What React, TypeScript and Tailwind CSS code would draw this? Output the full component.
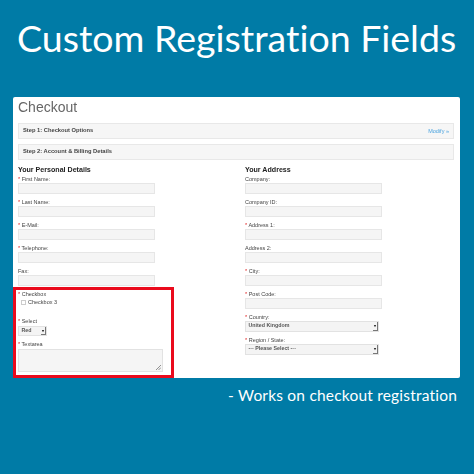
import React from 'react';

const Label = ({ text, required }: { text: string; required?: boolean }) => (
  <div className="h-[7.5px] whitespace-nowrap text-[5.5px] leading-[7.5px] text-[#444]">
    {required && <span className="text-[#e02020]">* </span>}
    {text}
  </div>
);

const Input = ({ text, required }: { text: string; required?: boolean }) => (
  <div className="h-[23px]">
    <Label text={text} required={required} />
    <div className="h-[10.5px] w-[137px] border border-[#e6e6e6] bg-[#f5f5f5]" />
  </div>
);

const Select = ({ value, className = '' }: { value: string; className?: string }) => (
  <div
    className={`flex h-[10.5px] items-center justify-between border border-[#e2e2e2] bg-[#f4f4f4] pl-[2.5px] text-[5.3px] font-bold text-[#555] ${className}`}
  >
    <span>{value}</span>
    <span className="flex h-full w-[5px] items-center justify-center border-r border-b border-[#777] text-[4px] leading-none text-[#222]">
      ▾
    </span>
  </div>
);

const Step = ({ title, modify }: { title: string; modify?: boolean }) => (
  <div className="flex h-[15.5px] items-center justify-between border border-[#e8e8e8] bg-[#f6f6f6] px-[4px] text-[5.75px] font-bold text-[#444]">
    <span>{title}</span>
    {modify && <span className="text-[5.5px] font-normal text-[#4aa3df]">Modify »</span>}
  </div>
);

export default function App() {
  return (
    <div className="h-[474px] w-[474px] overflow-hidden bg-[#007ba6] font-['Liberation_Sans',sans-serif]">
      <h1 className="h-[97px] whitespace-nowrap pt-[14px] pl-[17px] font-['Lato',sans-serif] text-[37.5px] leading-[48px] font-normal text-white [font-variant-ligatures:none]">
        Custom Registration Fields
      </h1>

      <div className="ml-[13px] h-[281px] w-[447px] rounded-[2px] bg-white pr-[6px] pl-[5px] blur-[0.35px]">
        <div className="pt-[1px] text-[14px] leading-[18px] text-[#666]">Checkout</div>

        <div className="mt-[7px] flex flex-col gap-[5.5px]">
          <Step title="Step 1: Checkout Options" modify />
          <Step title="Step 2: Account & Billing Details" />
        </div>

        <div className="mt-[5px] flex">
          <div className="w-[227px]">
            <div className="h-[11px] text-[7.1px] leading-[11px] font-bold text-[#222]">Your Personal Details</div>
            <Input text="First Name:" required />
            <Input text="Last Name:" required />
            <Input text="E-Mail:" required />
            <Input text="Telephone:" required />
            <Input text="Fax:" />

            <div className="mt-[-4px] -ml-[5px] h-[91px] w-[161px] border-[3px] border-[#ea0a1c] pt-[1.25px] pl-[2px]">
              <Label text="Checkbox" required />
              <div className="flex h-[8.5px] items-center gap-[2px] pl-[2.5px] text-[5.5px] text-[#444]">
                <span className="h-[5.5px] w-[5.5px] border border-[#ccc] bg-white" />
                <span>Checkbox 3</span>
              </div>
              <div className="mt-[11.5px]">
                <Label text="Select" required />
              </div>
              <Select value="Red" className="w-[29px]" />
              <div className="mt-[5px]">
                <Label text="Textarea" required />
              </div>
              <div className="relative h-[23.5px] w-[145px] border border-[#e2e2e2] bg-[#f5f5f5]">
                <svg className="absolute right-[1px] bottom-[1px]" width="5" height="5" viewBox="0 0 5 5">
                  <path d="M0 5 L5 0 M2.5 5 L5 2.5" stroke="#777" strokeWidth="0.8" />
                </svg>
              </div>
            </div>
          </div>

          <div className="w-[200px]">
            <div className="h-[11px] text-[7.1px] leading-[11px] font-bold text-[#222]">Your Address</div>
            <Input text="Company:" />
            <Input text="Company ID:" />
            <Input text="Address 1:" required />
            <Input text="Address 2:" />
            <Input text="City:" required />
            <Input text="Post Code:" required />
            <Label text="Country:" required />
            <Select value="United Kingdom" className="w-[134px]" />
            <div className="mt-[5px]">
              <Label text="Region / State:" required />
            </div>
            <Select value="--- Please Select ---" className="w-[134px]" />
          </div>
        </div>
      </div>

      <div className="mt-[7px] pr-[17px] text-right font-['Lato',sans-serif] text-[15.5px] leading-[20px] tracking-[0.2px] text-white [font-variant-ligatures:none]">
        - Works on checkout registration
      </div>
    </div>
  );
}
